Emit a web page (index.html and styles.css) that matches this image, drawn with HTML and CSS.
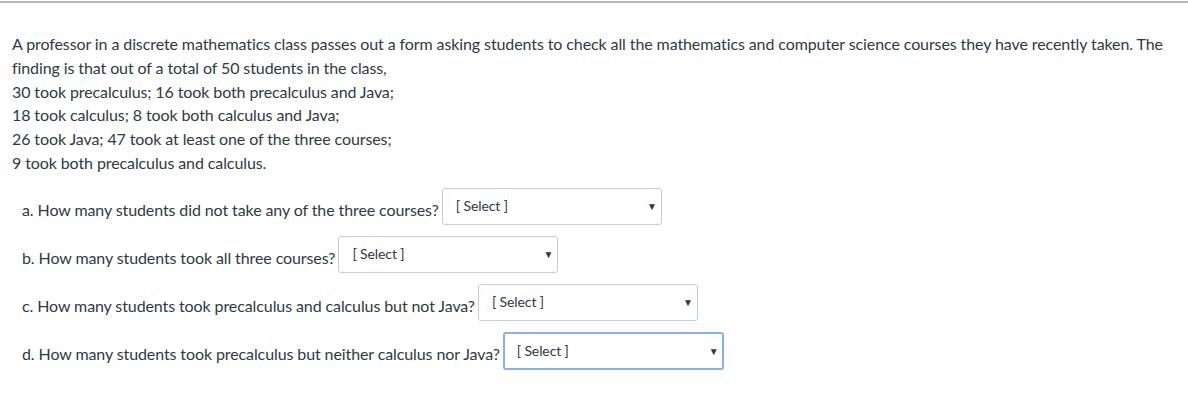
FILE: index.html
```html
<!DOCTYPE html>
<html>
<head>
<meta charset="utf-8">
<link rel="stylesheet" href="styles.css">
</head>
<body>
<div class="topbar"></div>
<div class="content">
  <p class="intro">A professor in a discrete mathematics class passes out a form asking students to check all the mathematics and computer science courses they have recently taken. The finding is that out of a total of 50 students in the class,<br>30 took precalculus; 16 took both precalculus and Java;<br>18 took calculus; 8 took both calculus and Java;<br>26 took Java; 47 took at least one of the three courses;<br>9 took both precalculus and calculus.</p>
  <div class="questions">
    <div class="row"><span class="q">a. How many students did not take any of the three courses?</span><div class="sel"><span class="val">[ Select ]</span><span class="arrow">&#9660;</span></div></div>
    <div class="row"><span class="q">b. How many students took all three courses?</span><div class="sel"><span class="val">[ Select ]</span><span class="arrow">&#9660;</span></div></div>
    <div class="row"><span class="q">c. How many students took precalculus and calculus but not Java?</span><div class="sel"><span class="val">[ Select ]</span><span class="arrow">&#9660;</span></div></div>
    <div class="row"><span class="q">d. How many students took precalculus but neither calculus nor Java?</span><div class="sel focus"><span class="val">[ Select ]</span><span class="arrow">&#9660;</span></div></div>
  </div>
</div>
</body>
</html>
```
FILE: styles.css
```css
html, body { margin: 0; padding: 0; background: #fff; }
body { font-family: Lato, "Open Sans", sans-serif; color: #2d3b45; font-variant-ligatures: none; }
.topbar { height: 2px; margin-top: 1px; background: #b5b9bc; }
.content { padding: 0 12px; }
.intro { margin: 29px 0 0; font-size: 16px; line-height: 23.8px; letter-spacing: -0.1px; }
.questions { padding: 13px 0 0 10px; display: flex; flex-direction: column; gap: 11px; }
.row { display: flex; align-items: center; gap: 3px; }
.q { font-size: 16px; letter-spacing: -0.1px; padding-top: 6px; }
.sel { width: 220px; height: 37px; box-sizing: border-box; border: 1px solid #c7cdd1; border-radius: 3px; display: flex; align-items: center; justify-content: space-between; padding: 0 4px 0 13px; }
.sel.focus { border: 2px solid #8cb0ea; width: 221px; height: 38px; padding: 0 3px 0 12px; }
.val { font-size: 14px; letter-spacing: -0.1px; margin-top: -1px; }
.arrow { font-size: 10px; color: #2d3b45; }
```
